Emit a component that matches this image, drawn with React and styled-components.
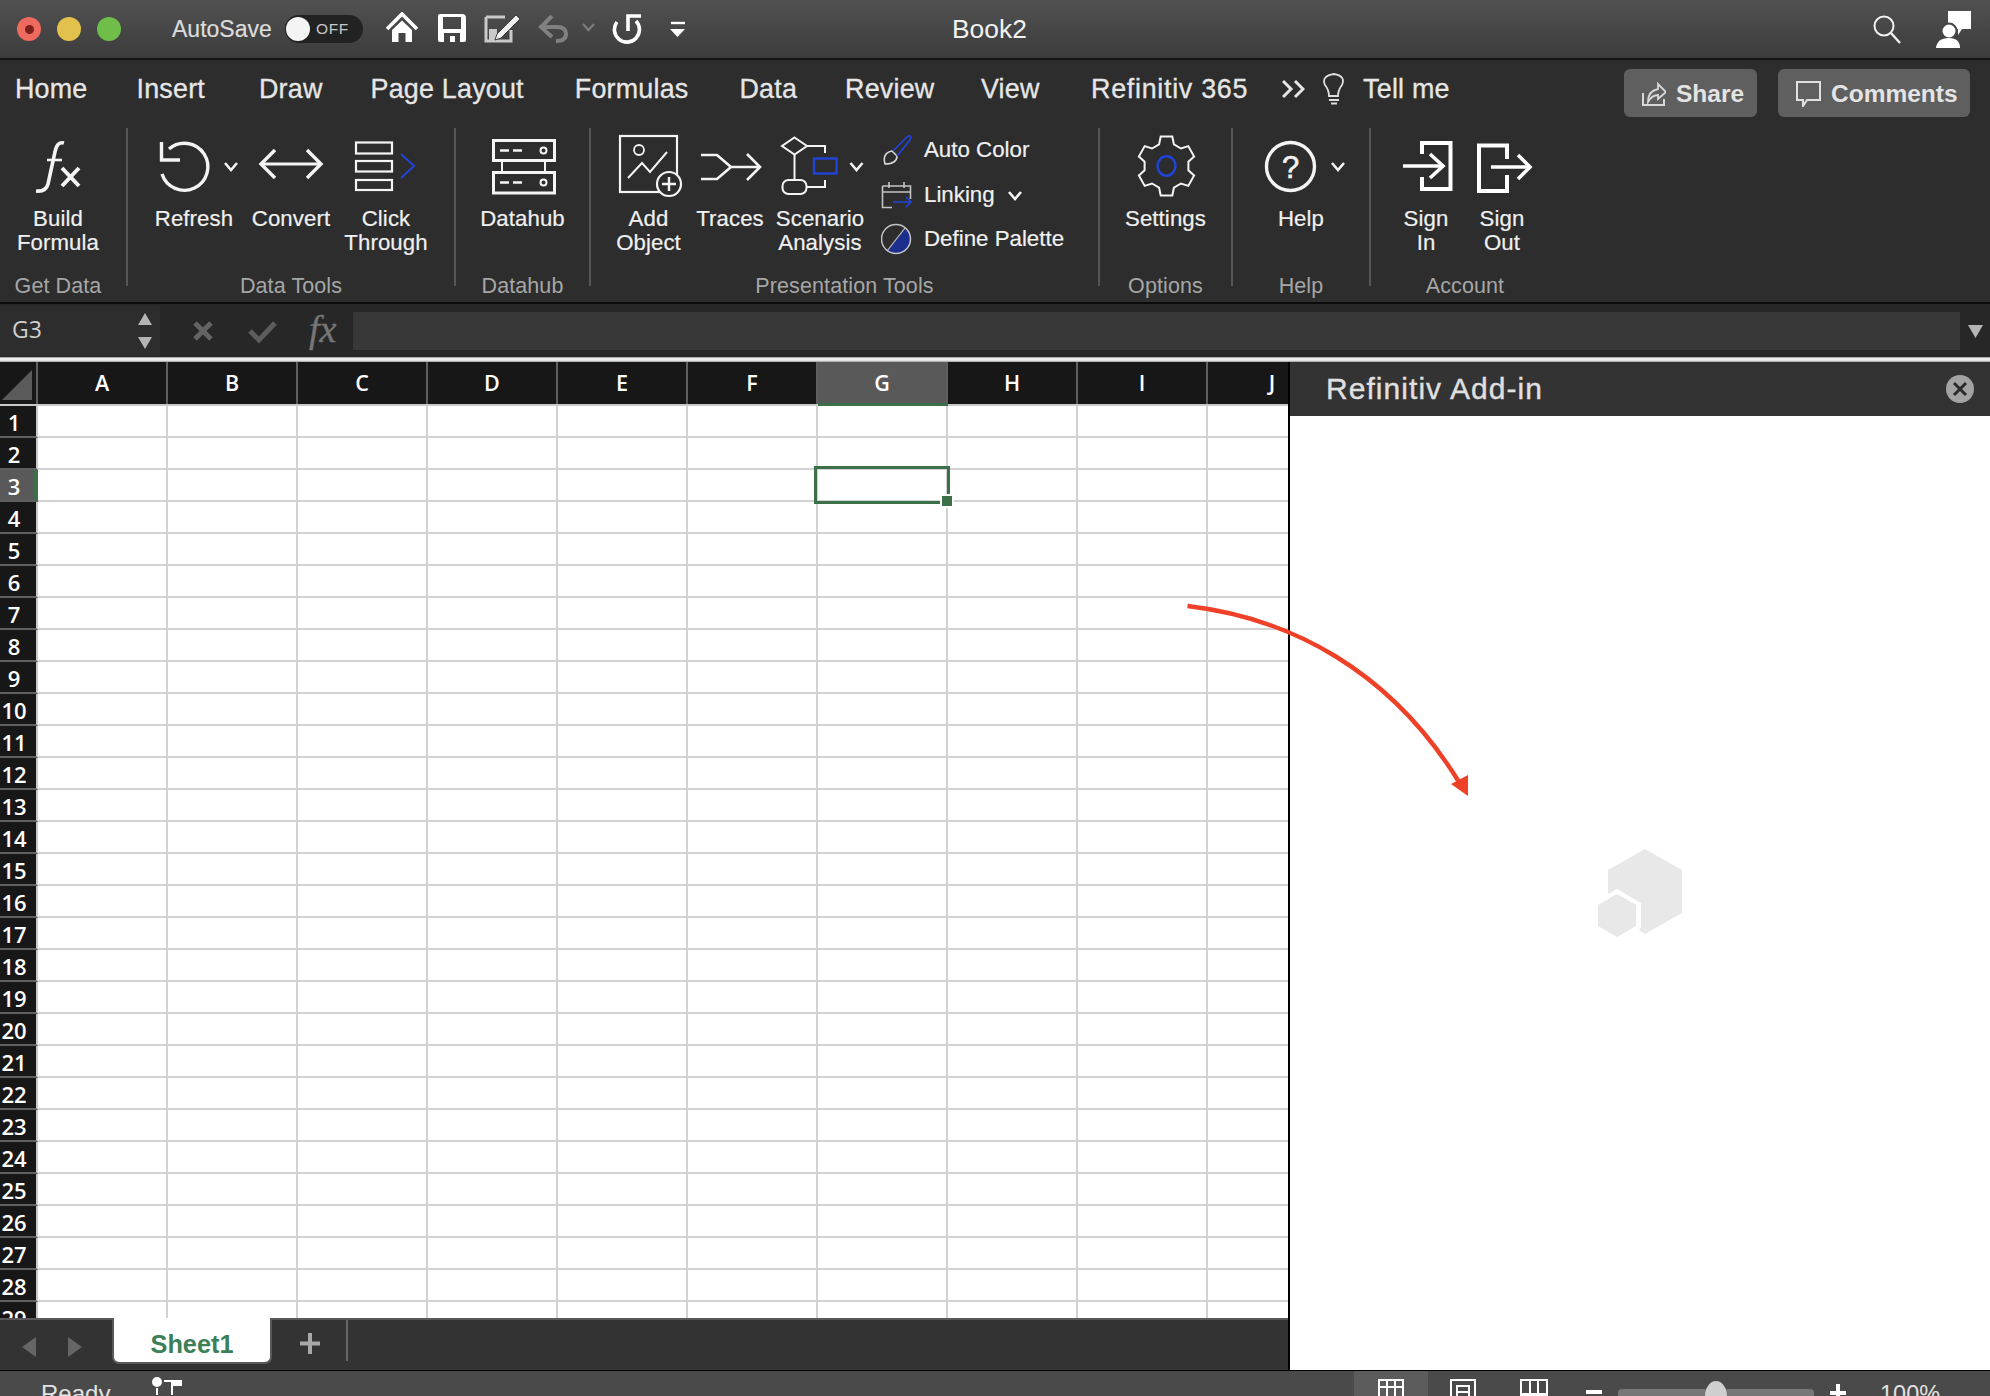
import React from 'react';
import styled, { createGlobalStyle } from 'styled-components';

const Global = createGlobalStyle`
  html, body { margin: 0; padding: 0; background: #fff; }
  * { box-sizing: border-box; }
`;
const sans = `"Liberation Sans", Arial, sans-serif`;
const grid = `"Open Sans", "Liberation Sans", sans-serif`;

const Page = styled.div`
  width: 1990px; height: 1396px; overflow: hidden; position: relative;
  display: flex; flex-direction: column; font-family: ${sans}; background: #fff;
`;
const Svg = styled.svg`
  display: block; flex: none; fill: none; stroke-linecap: butt; stroke-linejoin: miter;
`;
const Ico = ({ box: [x, y, w, h], children, className }) => (
  <Svg className={className} viewBox={`${x} ${y} ${w} ${h}`} width={w} height={h}>{children}</Svg>
);

/* title bar */
const TitleBar = styled.header`
  flex: none; height: 60px; padding-left: 17px; display: flex; align-items: center;
  background: linear-gradient(#515151, #3c3c3c); border-bottom: 2px solid #141414;
`;
const Lights = styled.div`display: flex; gap: 16px; width: 155px;`;
const Light = styled.span`
  width: 24px; height: 24px; border-radius: 50%; background: ${p => p.$c};
  display: flex; align-items: center; justify-content: center;
`;
const LightDot = styled.span`width: 9px; height: 9px; border-radius: 50%; background: #7d1f1a;`;
const AutoSave = styled.span`font-size: 23px; color: #dcdcdc; width: 113px; -webkit-text-stroke: .2px #dcdcdc;`;
const Toggle = styled.div`
  width: 78px; height: 28px; border-radius: 14px; background: #222; display: flex; align-items: center;
  padding-left: 1px; gap: 6px; font-size: 15.5px; letter-spacing: .6px; color: #c8c8c8;
`;
const Knob = styled.span`width: 24px; height: 24px; border-radius: 50%; background: #f4f4f4;`;
const QuickIcons = styled.div`display: flex; align-items: flex-start; margin: -2px 0 0 23px; height: 32px;`;
const DocTitle = styled.span`font-size: 26.4px; color: #f2f2f2; margin-left: 266px;`;
const TitleRight = styled.div`margin-left: auto; padding-right: 19px; display: flex; align-items: center; gap: 35px;`;

/* ribbon */
const Ribbon = styled.section`
  flex: none; height: 244px; background: #2d2d2d; border-bottom: 2px solid #0c0c0c;
  display: flex; flex-direction: column;
`;
const TabRow = styled.nav`
  flex: none; height: 68px; padding: 13px 20px 0 15px; display: flex; align-items: flex-start;
`;
const Tab = styled.span`
  font-size: 26.9px; line-height: 32px; color: #e6e6e6; margin-left: ${p => p.$ml || 0}px; white-space: nowrap;
  letter-spacing: ${p => p.$ls ?? 0.2}px; -webkit-text-stroke: .3px #e6e6e6;
`;
const TabGlyph = styled.span`margin-left: ${p => p.$ml}px; display: flex;`;
const Actions = styled.div`margin-left: auto; margin-top: -4px; display: flex; gap: 21px;`;
const Action = styled.button`
  height: 48px; width: ${p => p.$w}px; border: 0; border-radius: 6px; background: #5f5f5f; color: #e4e4e4;
  display: flex; align-items: center; gap: 10px; padding: 1px 0 0 18px;
  font: bold 24.5px ${sans};
`;
const Groups = styled.div`display: flex; align-items: flex-start;`;
const Group = styled.div`
  width: ${p => p.$w}px; margin-right: ${p => p.$mr || 0}px; flex: none; display: flex; flex-direction: column;
`;
const Divider = styled.i`flex: none; width: 2px; height: 158px; margin-left: -1px; margin-right: -1px; background: #555;`;
const Items = styled.div`
  height: 145.5px; padding-top: 2px; padding-left: ${p => p.$inset || 0}px; display: flex;
  justify-content: ${p => (p.$center ? 'center' : 'flex-start')};
`;
const GroupLabel = styled.div`font-size: 21.5px; letter-spacing: .1px; line-height: 24px; text-align: center; color: #a6a6a6;`;
const RibbonButton = styled.div`
  width: ${p => p.$w}px; flex: none; display: flex; flex-direction: column; align-items: center;
`;
const ButtonLabel = styled.div`
  margin-top: 5px; font-size: 22.2px; letter-spacing: .1px; line-height: 24px; text-align: center; color: #f0f0f0; white-space: pre-line;
  -webkit-text-stroke: .2px #f0f0f0;
`;
const MiniColumn = styled.div`
  display: flex; flex-direction: column; margin-left: ${p => p.$ml}px; margin-top: -2px;
`;
const MiniRow = styled.div`display: flex; align-items: center; height: 44.5px; gap: 12px;`;
const MiniText = styled.span`font-size: 22.3px; color: #f0f0f0; white-space: nowrap; -webkit-text-stroke: .2px #f0f0f0;`;

/* formula bar */
const FormulaBar = styled.div`
  flex: none; height: 53px; background: #272727; display: flex; align-items: center;
`;
const NameBox = styled.div`
  width: 160px; flex: none; height: 50px; background: #2d2d2d; padding-left: 12px; position: relative;
  display: flex; align-items: center; justify-content: space-between;
  font: 23px ${grid}; color: #cfcfcf;
`;
const NameText = styled.span`margin-top: -3px;`;
const FxText = styled.span`
  font: italic 38px "Liberation Serif", serif; color: #767676; flex: none; width: 44px; margin-left: 9px; margin-top: -4px;
  -webkit-text-stroke: .4px #767676;
`;
const FormulaInput = styled.div`flex: none; width: 1607px; height: 38px; background: #383838;`;
const GreyLine = styled.div`
  flex: none; height: 5px; background: linear-gradient(#8d8d8d 0, #ececec 30%, #ececec 65%, #9a9a9a 100%);
`;

/* main */
const Main = styled.div`flex: 1; min-height: 0; display: flex; position: relative;`;
const Sheet = styled.div`
  width: 1290px; flex: none; display: flex; flex-direction: column; border-right: 2px solid #000;
`;
const ColHeaders = styled.div`
  flex: none; height: 44px; display: flex; background: #171717; border-bottom: 2px solid #c9c9c9;
`;
const Corner = styled.div`
  width: 38px; flex: none; border-right: 2px solid #5f5f5f; padding: 8px 0 0 2px;
`;
const ColHead = styled.div`
  width: 130px; flex: none; text-align: center; font: 600 21.5px/42px ${grid}; color: #fff;
  border-right: 2px solid #5f5f5f; border-bottom: ${p => (p.$on ? '3px solid #3c7049' : 0)}; margin-bottom: ${p => (p.$on ? '-2px' : 0)};
  background: ${p => (p.$on ? '#595959' : 'transparent')};
`;
const Rows = styled.div`flex: 1; min-height: 0; overflow: hidden; position: relative; background: #fff;`;
const Row = styled.div`display: flex; height: 32px;`;
const RowHead = styled.div`
  width: 38px; flex: none; padding-right: 8px; text-align: center; font: 600 22px/32px ${grid}; letter-spacing: -.2px; color: #fff;
  background: ${p => (p.$on ? '#595959' : '#171717')};
  border-right: 2px solid ${p => (p.$on ? '#3c7049' : '#c9c9c9')};
  border-bottom: 2px solid #5f5f5f;
  box-shadow: ${p => (p.$on ? 'inset -2px 0 0 #3c7049' : 'none')};
`;
const Cell = styled.div`
  width: 130px; flex: none; border-right: 2px solid #d2d2d2; border-bottom: 2px solid #d2d2d2;
`;
const Selection = styled.div`
  position: absolute; left: 814px; top: 60px; width: 136px; height: 38px; border: 3.5px solid #3c7049;
`;
const Handle = styled.div`
  position: absolute; left: 942px; top: 90px; width: 10px; height: 10px; background: #3c7049; outline: 2px solid #fff;
`;
const TabStrip = styled.div`
  flex: none; height: 52px; background: #333; border-top: 2px solid #5a5a5a; display: flex; align-items: flex-start;
`;
const Arrows = styled.div`width: 112px; height: 100%; padding: 17px 0 0 22px; display: flex; gap: 32px; flex: none;`;
const SheetTab = styled.div`
  width: 160px; height: 46px; margin-top: -2px; background: #fff; border: 2px solid #5a5a5a; border-top: 0;
  border-radius: 0 0 7px 7px; text-align: center; font: bold 25.3px/52px ${sans}; color: #3c8058; flex: none;
`;
const AddSheet = styled.div`
  width: 76px; height: 41px; flex: none; border-right: 2px solid #666; padding: 13px 0 0 28px;
`;

/* pane */
const Pane = styled.aside`flex: 1; min-width: 0; display: flex; flex-direction: column; background: #fff;`;
const PaneHead = styled.div`
  flex: none; height: 54px; background: #333; padding: 0 16px 0 36px; display: flex; align-items: center; justify-content: space-between;
`;
const PaneTitle = styled.span`font-size: 30px; letter-spacing: 1.05px; color: #e0e0e0; -webkit-text-stroke: .35px #e0e0e0;`;
const PaneClose = styled.span`
  width: 28px; height: 28px; border-radius: 50%; background: #a3a3a3; display: flex; align-items: center; justify-content: center;
`;
const PaneBody = styled.div`flex: 1; display: flex; align-items: center; justify-content: center;`;

/* status */
const StatusBar = styled.footer`
  flex: none; height: 26px; overflow: hidden; border-top: 1px solid #000; background: #4a4a4a;
  display: flex; align-items: flex-start; color: #e2e2e2; font-size: 24px; line-height: 28px;
`;
const Ready = styled.span`margin: 9px 0 0 41px; width: 111px;`;
const StatusRight = styled.div`margin-left: 1170px; display: flex; align-items: flex-start; height: 26px; position: relative;`;
const ViewBtn = styled.div`
  width: ${p => p.$w}px; height: 26px; padding-left: ${p => p.$pad}px; padding-top: 8px; flex: none;
  background: ${p => (p.$on ? '#5c5c5c' : 'transparent')};
`;
const StatusIcon = styled(Ico)`margin: 8px 0 0 ${p => p.$ml || 0}px;`;
const Slider = styled.div`
  width: 196px; height: 10px; margin: 18px 0 0 16px; border-radius: 4px; background: #777; position: relative; flex: none;
`;
const SliderKnob = styled.span`
  position: absolute; left: 87px; top: -8px; width: 22px; height: 30px; border-radius: 50%; background: #cfcfcf;
`;
const Zoom = styled.span`margin: 9px 0 0 34px; font-size: 23.5px;`;

const Arrow = styled.svg`position: absolute; left: 0; top: 0; pointer-events: none; fill: none;`;

const BLUE = '#2144d8';
const W = '#f4f4f4';

const chev = (x, y, c = W) => <path d={`M${x} ${y}l6 7l6 -7`} stroke={c} strokeWidth="2.6" />;

function gearPath(cx, cy) {
  const pts = [];
  const R = 30, r = 23;
  for (let i = 0; i < 6; i++) {
    const a = -Math.PI / 2 + (i * Math.PI) / 3;
    const s = 0.2, t = 0.34;
    const add = (rad, ang) => pts.push(`${(cx + rad * Math.cos(ang) * 0.97).toFixed(1)} ${(cy + rad * Math.sin(ang)).toFixed(1)}`);
    add(r, a - t); add(R, a - s); add(R, a + s); add(r, a + t);
  }
  return 'M' + pts.join('L') + 'Z';
}

const tabs = [
  ['Home', 0], ['Insert', 49], ['Draw', 54], ['Page Layout', 48], ['Formulas', 51], ['Data', 51], ['Review', 48], ['View', 46.5], ['Refinitiv 365', 51.5, 0.7],
];
const cols = ['A', 'B', 'C', 'D', 'E', 'F', 'G', 'H', 'I', 'J'];
const rows = Array.from({ length: 29 }, (_, i) => i + 1);

export default function App() {
  return (
    <Page>
      <Global />
      <TitleBar>
        <Lights>
          <Light $c="#ee6a5f"><LightDot /></Light>
          <Light $c="#e3c14d" />
          <Light $c="#6fbe4a" />
        </Lights>
        <AutoSave>AutoSave</AutoSave>
        <Toggle><Knob />OFF</Toggle>
        <QuickIcons>
          <Ico box={[386, 12, 52, 32]}>
            <path d="M387 29L402 14L417 29" stroke="#fff" strokeWidth="3.6" />
            <path d="M392 30L402 20.5L412 30V42H405.5V33H398.5V42H392Z" fill="#fff" />
          </Ico>
          <Ico box={[438, 12, 46, 32]}>
            <path fillRule="evenodd" fill="#fff" d="M440 14H462Q466 14 466 18V40Q466 42 464 42H440Q438 42 438 40V16Q438 14 440 14ZM443 17V29H461V17ZM444 33V42H460V33ZM450 36H455V42H450Z" />
          </Ico>
          <Ico box={[484, 12, 53, 32]}>
            <path d="M486 17H505M486 17V41H511V30" stroke="#c9c9c9" strokeWidth="3" />
            <path d="M489 29H497V40H489Z" fill="#c9c9c9" />
            <path d="M497 34L516 15L520 19L501 38L495 40Z" fill="#f0f0f0" stroke="#3f3f3f" strokeWidth="1" />
          </Ico>
          <Ico box={[537, 12, 45, 32]}>
            <path d="M552 16L541 27L552 37M541 27H557Q566 27 566 34Q566 41 556 41" stroke="#808080" strokeWidth="4" />
          </Ico>
          <Ico box={[582, 12, 30, 32]}>
            <path d="M583 24l5.5 6l5.5 -6" stroke="#7c7c7c" strokeWidth="2.2" />
          </Ico>
          <Ico box={[612, 12, 58, 32]}>
            <path d="M617 22A12.5 12.5 0 1 0 636 21" stroke="#fff" strokeWidth="3.6" />
            <path d="M641 16H628V31" stroke="#fff" strokeWidth="3.6" />
          </Ico>
          <Ico box={[670, 12, 16, 32]}>
            <path d="M671 23H685" stroke="#fff" strokeWidth="2.4" />
            <path d="M670 29H685L677.5 37Z" fill="#fff" />
          </Ico>
        </QuickIcons>
        <DocTitle>Book2</DocTitle>
        <TitleRight>
          <Ico box={[1874, 14, 28, 29]}>
            <circle cx="1885" cy="25" r="9.5" stroke="#f0f0f0" strokeWidth="2" />
            <path d="M1892 32L1901 42" stroke="#f0f0f0" strokeWidth="2.4" />
          </Ico>
          <Ico box={[1936, 10, 35, 37]}>
            <path d="M1948 10H1971V28H1962L1958 34V28H1948Z" fill="#fff" />
            <circle cx="1949" cy="30" r="7.5" fill="#fff" stroke="#454545" strokeWidth="2" />
            <path d="M1936 47Q1937 37 1949 37Q1960 37 1960 47Z" fill="#fff" />
          </Ico>
        </TitleRight>
      </TitleBar>

      <Ribbon>
        <TabRow>
          {tabs.map(([t, ml, ls]) => <Tab key={t} $ml={ml} $ls={ls}>{t}</Tab>)}
          <TabGlyph $ml={34}>
            <Ico box={[1283, 73, 23, 32]}>
              <path d="M1284 81L1292 89L1284 97M1296 81L1304 89L1296 97" stroke="#e6e6e6" strokeWidth="3" />
            </Ico>
          </TabGlyph>
          <TabGlyph $ml={17}>
            <Ico box={[1323, 73, 25, 32]}>
              <path d="M1330 96Q1330 90 1326 85Q1322 76 1335 74Q1347 76 1343 85Q1339 90 1339 96Z" stroke="#e0e0e0" strokeWidth="1.8" />
              <path d="M1330 100H1340M1332 103.5H1338" stroke="#e0e0e0" strokeWidth="2" />
            </Ico>
          </TabGlyph>
          <Tab $ml={16}>Tell me</Tab>
          <Actions>
            <Action $w={133}>
              <Ico box={[1643, 80, 24, 26]}>
                <path d="M1644 92V104H1665V98" stroke="#d8d8d8" strokeWidth="2" />
                <path d="M1649 101Q1649 90 1659 88V83L1667 91L1659 98V94Q1653 94 1649 101Z" stroke="#d8d8d8" strokeWidth="1.8" />
              </Ico>
              Share
            </Action>
            <Action $w={192}>
              <Ico box={[1796, 80, 25, 26]}>
                <path d="M1797 81H1820V99H1807L1803 105V99H1797Z" stroke="#e0e0e0" strokeWidth="2" />
              </Ico>
              Comments
            </Action>
          </Actions>
        </TabRow>
        <Groups>
          <Group $w={116} $mr={11}>
            <Items $center>
              <RibbonButton $w={116}>
                <Ico box={[0, 130, 116, 72]}>
                  <path d="M64 143Q57 141 55 152L48 184Q46 192 36 191" stroke={W} strokeWidth="3.6" />
                  <path d="M47 160H62" stroke={W} strokeWidth="2.6" />
                  <path d="M62 168L79 186M79 168L62 186" stroke={W} strokeWidth="4" />
                </Ico>
                <ButtonLabel>{'Build\nFormula'}</ButtonLabel>
              </RibbonButton>
            </Items>
            <GroupLabel>Get Data</GroupLabel>
          </Group>
          <Divider />
          <Group $w={328}>
            <Items $inset={23}>
              <RibbonButton $w={88}>
                <Ico box={[151, 130, 88, 72]}>
                  <path d="M170 149A23.5 23.5 0 1 1 163 174" stroke={W} strokeWidth="3.4" />
                  <path d="M162.5 142V160H181" stroke={W} strokeWidth="3.4" />
                  {chev(226, 163)}
                </Ico>
                <ButtonLabel>Refresh</ButtonLabel>
              </RibbonButton>
              <RibbonButton $w={106}>
                <Ico box={[239, 130, 106, 72]}>
                  <path d="M263 164H322" stroke={W} strokeWidth="3.2" />
                  <path d="M276 150L262 164L276 178M308 150L322 164L308 178" stroke={W} strokeWidth="3.4" />
                </Ico>
                <ButtonLabel>Convert</ButtonLabel>
              </RibbonButton>
              <RibbonButton $w={84}>
                <Ico box={[345, 130, 84, 72]}>
                  <g stroke={W} strokeWidth="2.2">
                    <rect x="357" y="142.5" width="36" height="11" />
                    <rect x="357" y="161" width="36" height="10.5" />
                    <rect x="357" y="180" width="36" height="10" />
                  </g>
                  <path d="M402 154L415 166L402 178" stroke={BLUE} strokeWidth="2" />
                </Ico>
                <ButtonLabel>{'Click\nThrough'}</ButtonLabel>
              </RibbonButton>
            </Items>
            <GroupLabel>Data Tools</GroupLabel>
          </Group>
          <Divider />
          <Group $w={135}>
            <Items $center>
              <RibbonButton $w={100}>
                <Ico box={[472, 130, 100, 72]}>
                  <g stroke={W}>
                    <rect x="492.5" y="140.5" width="61" height="20" strokeWidth="3" />
                    <rect x="492.5" y="172.5" width="61" height="20.5" strokeWidth="3" />
                    <path d="M501 161V172M544 161V172" strokeWidth="2" />
                    <path d="M499 150.5H508M512 150.5H521M499 182.5H508M512 182.5H521" strokeWidth="2.4" />
                    <circle cx="542.5" cy="150.5" r="3" strokeWidth="2" />
                    <circle cx="542.5" cy="182.5" r="3" strokeWidth="2" />
                  </g>
                </Ico>
                <ButtonLabel>Datahub</ButtonLabel>
              </RibbonButton>
            </Items>
            <GroupLabel>Datahub</GroupLabel>
          </Group>
          <Divider />
          <Group $w={509}>
            <Items $inset={17}>
              <RibbonButton $w={83}>
                <Ico box={[607, 130, 83, 72]}>
                  <g stroke={W}>
                    <rect x="620" y="136" width="57" height="56" strokeWidth="2.2" />
                    <circle cx="639" cy="150" r="5" strokeWidth="1.8" />
                    <path d="M628 178L642 163L650 172L667 152" strokeWidth="2" />
                    <circle cx="669" cy="184" r="12" strokeWidth="2.2" fill="#2d2d2d" />
                    <path d="M669 177V191M662 184H676" strokeWidth="2.4" />
                  </g>
                </Ico>
                <ButtonLabel>{'Add\nObject'}</ButtonLabel>
              </RibbonButton>
              <RibbonButton $w={80}>
                <Ico box={[690, 130, 80, 72]}>
                  <path d="M701 155H717L731 167L717 179H701M731 167H759M747 154L760 167L747 180" stroke={W} strokeWidth="2.6" />
                </Ico>
                <ButtonLabel>Traces</ButtonLabel>
              </RibbonButton>
              <RibbonButton $w={100}>
                <Ico box={[770, 130, 100, 72]}>
                  <g stroke={W} strokeWidth="2">
                    <path d="M794.5 137.5L807 146L794.5 154.5L782 146Z" />
                    <path d="M794.5 155V180M807 146H825V153M806 187H825V180" />
                    <rect x="782.5" y="180" width="24" height="14" rx="6" />
                  </g>
                  <rect x="814" y="158.5" width="22.5" height="15" stroke={BLUE} strokeWidth="2.4" />
                  {chev(850.5, 163)}
                </Ico>
                <ButtonLabel>{'Scenario\nAnalysis'}</ButtonLabel>
              </RibbonButton>
              <MiniColumn $ml={11}>
                <MiniRow>
                  <Ico box={[881, 134, 31, 33]}>
                    <path d="M885 164Q882 153 892 151L897 156Q897 164 885 164Z" stroke="#d8d8d8" strokeWidth="1.6" />
                    <path d="M893 151L908 136Q912 135 910 140L897 156" stroke={BLUE} strokeWidth="1.7" />
                  </Ico>
                  <MiniText>Auto Color</MiniText>
                </MiniRow>
                <MiniRow>
                  <Ico box={[881, 179, 31, 30]}>
                    <path d="M882.5 185H910.5V198M882.5 185V206.5H892M882.5 191H910.5M889 181V187M904 181V187" stroke="#c4c4c4" strokeWidth="1.6" />
                    <path d="M893 201H911M906 196L911 201L906 206" stroke={BLUE} strokeWidth="1.6" />
                  </Ico>
                  <MiniText>Linking</MiniText>
                  <Ico box={[1008, 188, 16, 14]}>
                    <path d="M1010 192l6 7l6 -7" stroke={W} strokeWidth="2.6" />
                  </Ico>
                </MiniRow>
                <MiniRow>
                  <Ico box={[881, 222, 31, 32]}>
                    <path d="M905 227A14.5 14.5 0 0 1 887 250Z" fill="#1c2f8c" />
                    <circle cx="896" cy="238" r="14.5" stroke="#c4c4c4" strokeWidth="1.5" />
                    <path d="M905 227L887 250" stroke="#c4c4c4" strokeWidth="1.2" />
                  </Ico>
                  <MiniText>Define Palette</MiniText>
                </MiniRow>
              </MiniColumn>
            </Items>
            <GroupLabel>Presentation Tools</GroupLabel>
          </Group>
          <Divider />
          <Group $w={133}>
            <Items $center>
              <RibbonButton $w={100}>
                <Ico box={[1115, 130, 100, 72]}>
                  <path d={gearPath(1165.5, 166)} stroke={W} strokeWidth="2" />
                  <ellipse cx="1165.5" cy="166" rx="9" ry="9.8" stroke={BLUE} strokeWidth="2.4" />
                </Ico>
                <ButtonLabel>Settings</ButtonLabel>
              </RibbonButton>
            </Items>
            <GroupLabel>Options</GroupLabel>
          </Group>
          <Divider />
          <Group $w={138}>
            <Items $center>
              <RibbonButton $w={120}>
                <Ico box={[1241, 130, 120, 72]}>
                  <circle cx="1290.5" cy="166.5" r="24" stroke={W} strokeWidth="3.4" />
                  <text x="1290.5" y="178" textAnchor="middle" fontSize="31" fontFamily={sans} fill={W} stroke={W} strokeWidth=".6">?</text>
                  {chev(1332, 163)}
                </Ico>
                <ButtonLabel>Help</ButtonLabel>
              </RibbonButton>
            </Items>
            <GroupLabel>Help</GroupLabel>
          </Group>
          <Divider />
          <Group $w={190}>
            <Items $inset={25}>
              <RibbonButton $w={62}>
                <Ico box={[1395, 130, 62, 72]}>
                  <path d="M1422 154V143H1450.5V189H1422V177" stroke="#fff" strokeWidth="4" />
                  <path d="M1403 166H1443" stroke="#fff" strokeWidth="3.6" />
                  <path d="M1430 154L1443 166L1430 178" stroke="#fff" strokeWidth="3.6" />
                </Ico>
                <ButtonLabel>{'Sign\nIn'}</ButtonLabel>
              </RibbonButton>
              <RibbonButton $w={90}>
                <Ico box={[1457, 130, 90, 72]}>
                  <path d="M1507 159V145.5H1479V191H1507V175" stroke="#fff" strokeWidth="4" />
                  <path d="M1491 167H1529" stroke="#fff" strokeWidth="3.6" />
                  <path d="M1518 155L1530 167L1518 179" stroke="#fff" strokeWidth="3.6" />
                </Ico>
                <ButtonLabel>{'Sign\nOut'}</ButtonLabel>
              </RibbonButton>
            </Items>
            <GroupLabel>Account</GroupLabel>
          </Group>
        </Groups>
      </Ribbon>

      <FormulaBar>
        <NameBox>
          <NameText>G3</NameText>
          <Ico box={[130, 312, 30, 38]}>
            <path d="M138 325L145 313L152 325ZM138 337L145 349L152 337Z" fill="#b5b5b5" />
          </Ico>
        </NameBox>
        <Ico box={[160, 312, 140, 38]}>
          <path d="M195 323L211 339M211 323L195 339" stroke="#636363" strokeWidth="5" />
          <path d="M250 331L259 340L275 323" stroke="#5c5c5c" strokeWidth="5" />
        </Ico>
        <FxText>fx</FxText>
        <FormulaInput />
        <Ico box={[1960, 320, 30, 22]}>
          <path d="M1968 325H1983L1975.5 338Z" fill="#b5b5b5" />
        </Ico>
      </FormulaBar>
      <GreyLine />

      <Main>
        <Sheet>
          <ColHeaders>
            <Corner>
              <Ico box={[2, 370, 30, 30]}><path d="M2 400L32 370V400Z" fill="#5a5a5a" /></Ico>
            </Corner>
            {cols.map(c => <ColHead key={c} $on={c === 'G'}>{c}</ColHead>)}
          </ColHeaders>
          <Rows>
            {rows.map(r => (
              <Row key={r}>
                <RowHead $on={r === 3}>{r}</RowHead>
                {cols.map(c => <Cell key={c} />)}
              </Row>
            ))}
            <Selection />
            <Handle />
          </Rows>
          <TabStrip>
            <Arrows>
              <Ico box={[22, 1337, 14, 20]}><path d="M36 1337V1357L22 1347Z" fill="#666" /></Ico>
              <Ico box={[68, 1337, 14, 20]}><path d="M68 1337V1357L82 1347Z" fill="#666" /></Ico>
            </Arrows>
            <SheetTab>Sheet1</SheetTab>
            <AddSheet>
              <Ico box={[300, 1333, 20, 21]}><path d="M310 1333V1354M300 1343.5H320" stroke="#a8a8a8" strokeWidth="4" /></Ico>
            </AddSheet>
          </TabStrip>
        </Sheet>
        <Pane>
          <PaneHead>
            <PaneTitle>Refinitiv Add-in</PaneTitle>
            <PaneClose>
              <Ico box={[0, 0, 16, 16]}><path d="M2 2L14 14M14 2L2 14" stroke="#2b2b2b" strokeWidth="3" /></Ico>
            </PaneClose>
          </PaneHead>
          <PaneBody>
            <Ico box={[1597, 847, 86, 90]}>
              <path d="M1645 848L1682 869V912L1645 933L1639 929L1641 926V902L1617 888L1608 893V869Z" fill="#e8e8e8" />
              <path d="M1617 893L1636 904V925L1617 936L1598 925V904Z" fill="#e8e8e8" />
            </Ico>
          </PaneBody>
        </Pane>
        <Arrow width="1990" height="1034" viewBox="0 362 1990 1034">
          <path d="M1187.5 606C1290 618 1390 670 1459 782" stroke="#ee4128" strokeWidth="4.4" />
          <path d="M1451 784L1468 775L1468 796Z" fill="#ee4128" />
        </Arrow>
      </Main>

      <StatusBar>
        <Ready>Ready</Ready>
        <Ico box={[152, 1372, 32, 24]}>
          <circle cx="157" cy="1383" r="5" fill="#fff" />
          <path d="M157 1389V1396M164 1382H176M172 1382V1396" stroke="#fff" strokeWidth="2" />
          <path d="M172 1381H182V1387H172Z" fill="#fff" />
        </Ico>
        <StatusRight>
          <ViewBtn $on $w={74} $pad={24}>
            <Ico box={[1378, 1380, 26, 20]}>
              <path d="M1379 1381H1403V1400H1379ZM1387 1381V1400M1395 1381V1400M1379 1388H1403" stroke="#fff" strokeWidth="2" />
            </Ico>
          </ViewBtn>
          <ViewBtn $w={92} $pad={22}>
            <Ico box={[1450, 1380, 26, 20]}>
              <path d="M1451 1400V1381H1475V1400M1457 1387H1469V1400H1457ZM1457 1393H1469" stroke="#fff" strokeWidth="2" />
            </Ico>
          </ViewBtn>
          <ViewBtn $w={66} $pad={0}>
            <Ico box={[1520, 1380, 28, 20]}>
              <path d="M1521 1400V1381H1547V1400M1530 1381V1394M1538 1381V1394" stroke="#fff" strokeWidth="2" />
              <path d="M1521 1394H1547V1400H1521Z" fill="#fff" />
            </Ico>
          </ViewBtn>
          <StatusIcon box={[1586, 1380, 16, 20]}><path d="M1586 1393H1602" stroke="#fff" strokeWidth="4" /></StatusIcon>
          <Slider><SliderKnob /></Slider>
          <StatusIcon $ml={16} box={[1830, 1380, 16, 20]}><path d="M1830 1394H1846M1838 1385V1400" stroke="#fff" strokeWidth="4" /></StatusIcon>
          <Zoom>100%</Zoom>
        </StatusRight>
      </StatusBar>
    </Page>
  );
}
